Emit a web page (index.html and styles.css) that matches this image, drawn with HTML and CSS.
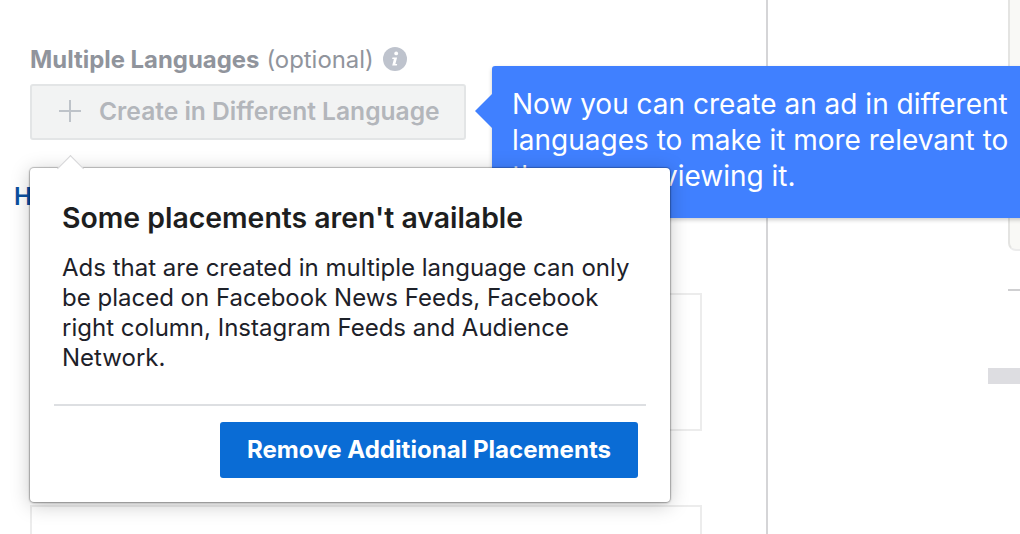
FILE: index.html
```html
<!DOCTYPE html>
<html lang="en">
<head>
    <meta charset="UTF-8">
    <meta name="viewport" content="width=device-width, initial-scale=1.0">
    <title>Multiple Languages</title>
    <link rel="stylesheet" href="styles.css">
</head>
<body>
    <div class="page">
        <main class="form-column">
            <div class="field-label">
                <strong>Multiple Languages</strong>
                <span class="optional">(optional)</span>
                <span class="info-icon">
                    <svg viewBox="0 0 24 24" width="24" height="24">
                        <circle cx="12" cy="12" r="12" fill="#bec3cd"/>
                        <circle cx="13.2" cy="6.4" r="1.9" fill="#fff"/>
                        <path d="M9.5 10.4h4.6l-1.7 6.6h1.8l-.4 1.6H9.2l1.7-6.6H9.1z" fill="#fff"/>
                    </svg>
                </span>
            </div>
            <button class="create-btn">
                <svg class="plus" viewBox="0 0 22 22" width="22" height="22">
                    <path d="M10 0h2v10h10v2H12v10h-2V12H0v-2h10z" fill="#bec3c9"/>
                </svg>
                Create in Different Language
            </button>
            <div class="cut-link">H</div>
            <div class="ghost-box ghost-one"></div>
            <div class="ghost-box ghost-two"></div>
        </main>

        <aside class="side-column">
            <div class="side-card"></div>
            <div class="side-rule"></div>
            <div class="side-chip"></div>
        </aside>

        <div class="coach-mark">
            <p>Now you can create an ad in different languages to make it more relevant to the person viewing it.</p>
        </div>

        <div class="popover">
            <h2>Some placements aren't available</h2>
            <p>Ads that are created in multiple language can only be placed on Facebook News Feeds, Facebook right column, Instagram Feeds and Audience Network.</p>
            <div class="popover-footer">
                <button class="remove-btn">Remove Additional Placements</button>
            </div>
        </div>
    </div>
</body>
</html>
```

FILE: styles.css
```css
html, body {
    margin: 0;
    height: 100%;
    overflow: hidden;
    background: white;
}
body {
    font-family: Inter, 'Liberation Sans', sans-serif;
}
.page {
    position: relative;
    display: flex;
    width: 1020px;
    height: 534px;
    overflow: hidden;
}
.form-column {
    flex: none;
    box-sizing: border-box;
    width: 768px;
    padding: 44px 0 0 30px;
    border-right: 2px solid #d5d5d7;
}
.field-label {
    display: flex;
    align-items: center;
    height: 30px;
    font-size: 23.9px;
    color: #90949c;
}
.field-label strong {
    font-weight: 700;
}
.optional {
    margin-left: 7px;
}
.info-icon {
    display: flex;
    margin-left: 9px;
}
.create-btn {
    display: flex;
    align-items: center;
    box-sizing: border-box;
    width: 436px;
    height: 56px;
    margin-top: 10px;
    padding: 0 0 2px 27px;
    background: #f2f3f3;
    border: 2px solid #e3e5e6;
    border-radius: 3px;
    color: #b3b6bb;
    font-family: inherit;
    font-size: 24.6px;
    font-weight: 600;
}
.plus {
    margin-right: 18px;
}
.cut-link {
    margin: 42px 0 0 -16px;
    color: #0b4fa0;
    font-size: 24px;
    font-weight: 600;
}
.ghost-box {
    box-sizing: border-box;
    width: 672px;
    background: white;
    border: 2px solid #ececec;
}
.ghost-one {
    height: 138px;
    margin-top: 82px;
}
.ghost-two {
    height: 100px;
    margin-top: 74px;
}
.side-column {
    flex: 1;
}
.side-card {
    box-sizing: border-box;
    width: 20px;
    height: 251px;
    margin-left: 240px;
    background: #f9f9f6;
    border-left: 2px solid #e4e4e2;
    border-bottom: 2px solid #ececec;
    border-bottom-left-radius: 8px;
}
.side-rule {
    width: 12px;
    height: 2px;
    margin: 38px 0 0 240px;
    background: #cfcfd1;
}
.side-chip {
    width: 32px;
    height: 16px;
    margin: 77px 0 0 220px;
    background: #dddde1;
}
.coach-mark {
    position: absolute;
    left: 492px;
    top: 66px;
    box-sizing: border-box;
    width: 540px;
    height: 152px;
    padding: 20px 0 0 20px;
    background: #4080ff;
    border-radius: 3px 0 0 3px;
    box-shadow: 0 2px 4px rgba(0,0,0,0.2);
    color: white;
    font-size: 28px;
    line-height: 36px;
}
.coach-mark::before {
    content: "";
    position: absolute;
    left: -17px;
    top: 28px;
    border-style: solid;
    border-width: 17px 17px 17px 0;
    border-color: transparent #4080ff transparent transparent;
}
.coach-mark p {
    width: 505px;
    margin: 0;
}
.popover {
    position: absolute;
    left: 30px;
    top: 168px;
    box-sizing: border-box;
    width: 640px;
    height: 334px;
    padding: 34px 24px 0 32px;
    background: white;
    border-radius: 4px;
    box-shadow: 0 0 1px 1px rgba(0,0,0,0.22), 0 1px 3px rgba(0,0,0,0.2), 0 3px 20px rgba(0,0,0,0.22);
}
.popover::before {
    content: "";
    position: absolute;
    left: 31px;
    top: -9px;
    width: 18px;
    height: 18px;
    background: white;
    border-top: 1px solid #d5d5d7;
    border-left: 1px solid #d5d5d7;
    transform: rotate(45deg);
}
.popover h2 {
    position: relative;
    margin: 0;
    color: #1d1e20;
    font-size: 28.4px;
    line-height: 32px;
    font-weight: 600;
}
.popover p {
    max-width: 575px;
    margin: 19px 0 0;
    color: #1d2129;
    font-size: 24px;
    line-height: 30px;
}
.popover-footer {
    display: flex;
    justify-content: flex-end;
    margin: 31px 0 0 -8px;
    padding-top: 16px;
    border-top: 2px solid #dddfe2;
}
.remove-btn {
    width: 418px;
    height: 56px;
    margin-right: 8px;
    padding-bottom: 2px;
    background: #0a6cd5;
    border: none;
    border-radius: 3px;
    color: white;
    font-family: inherit;
    font-size: 24.1px;
    font-weight: 700;
}
```
